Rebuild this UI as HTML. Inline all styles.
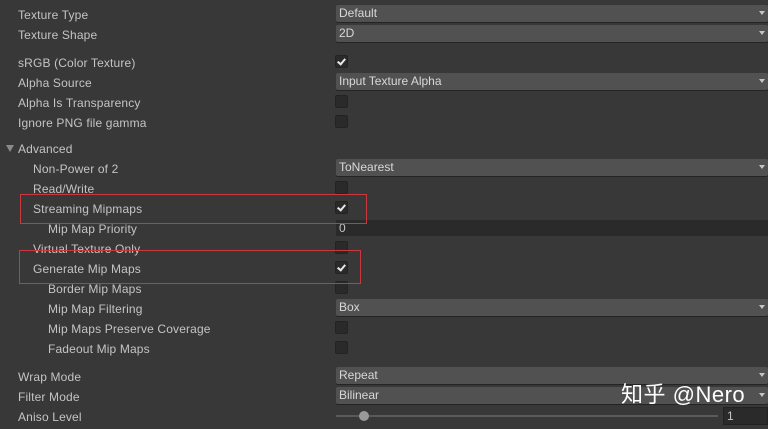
<!DOCTYPE html><html><head><style>
body{margin:0;width:768px;height:429px;background:#383838;font-family:"Liberation Sans","Noto Sans CJK SC",sans-serif;font-size:12px;color:#c4c4c4;position:relative;overflow:hidden}
.l{position:absolute;line-height:14px;white-space:nowrap;margin-top:1px;letter-spacing:0.15px}
.d{position:absolute;left:336px;width:432px;height:17px;background:#515151;border-radius:2px;box-shadow:0 1px 0 #242424;line-height:17px;text-indent:3px;color:#d8d8d8}
.d:after{content:"";position:absolute;right:3px;top:6px;border-left:3px solid transparent;border-right:3px solid transparent;border-top:4px solid #c4c4c4}
.c{position:absolute;left:335px;width:13px;height:13px;background:#2a2a2a;border-radius:2px;border:1px solid #232323;box-sizing:border-box}
.c.k:after{content:"";position:absolute;left:3px;top:1px;width:3px;height:6px;border:solid #e8e8e8;border-width:0 2px 2px 0;transform:rotate(40deg)}
.r{position:absolute;border:1px solid #c8383e}
</style></head><body>
<div class="l" style="left:18px;top:7px">Texture Type</div>
<div class="l" style="left:18px;top:27px">Texture Shape</div>
<div class="l" style="left:18px;top:55px">sRGB (Color Texture)</div>
<div class="l" style="left:18px;top:75px">Alpha Source</div>
<div class="l" style="left:18px;top:95px">Alpha Is Transparency</div>
<div class="l" style="left:18px;top:115px">Ignore PNG file gamma</div>
<div style="position:absolute;left:6px;top:145px;border-left:4px solid transparent;border-right:4px solid transparent;border-top:7px solid #8a8a8a"></div>
<div class="l" style="left:18px;top:141px">Advanced</div>
<div class="l" style="left:33px;top:161px">Non-Power of 2</div>
<div class="l" style="left:33px;top:181px">Read/Write</div>
<div class="l" style="left:33px;top:201px">Streaming Mipmaps</div>
<div class="l" style="left:48px;top:221px">Mip Map Priority</div>
<div class="l" style="left:33px;top:241px">Virtual Texture Only</div>
<div class="l" style="left:33px;top:261px">Generate Mip Maps</div>
<div class="l" style="left:48px;top:281px">Border Mip Maps</div>
<div class="l" style="left:48px;top:301px">Mip Map Filtering</div>
<div class="l" style="left:48px;top:321px">Mip Maps Preserve Coverage</div>
<div class="l" style="left:48px;top:341px">Fadeout Mip Maps</div>
<div class="l" style="left:18px;top:369px">Wrap Mode</div>
<div class="l" style="left:18px;top:389px">Filter Mode</div>
<div class="l" style="left:18px;top:409px">Aniso Level</div>

<div class="d" style="top:5px">Default</div>
<div class="d" style="top:25px">2D</div>
<div class="c k" style="top:55px"></div>
<div class="d" style="top:73px">Input Texture Alpha</div>
<div class="c" style="top:95px"></div>
<div class="c" style="top:115px"></div>
<div class="d" style="top:159px">ToNearest</div>
<div class="c" style="top:181px"></div>
<div class="c k" style="top:201px"></div>
<div style="position:absolute;left:336px;top:220px;width:432px;height:16px;background:#2a2a2a;line-height:17px;text-indent:3px">0</div>
<div class="c" style="top:241px"></div>
<div class="c k" style="top:261px"></div>
<div class="c" style="top:281px"></div>
<div class="d" style="top:299px">Box</div>
<div class="c" style="top:321px"></div>
<div class="c" style="top:341px"></div>
<div class="d" style="top:367px">Repeat</div>
<div class="d" style="top:387px">Bilinear</div>
<div style="position:absolute;left:336px;top:415px;width:382px;height:2px;background:#5a5a5a"></div>
<div style="position:absolute;left:359px;top:411px;width:10px;height:10px;border-radius:50%;background:#999"></div>
<div style="position:absolute;left:723px;top:407px;width:45px;height:18px;background:#2a2a2a;border:1px solid #222;box-sizing:border-box;line-height:17px;text-indent:3px">1</div>

<div class="r" style="left:20px;top:194px;width:345px;height:28px"></div>
<div class="r" style="left:19px;top:250px;width:340px;height:32px"></div>
<div style="position:absolute;left:621px;top:382px;font-size:22px;line-height:26px;color:#fff;letter-spacing:0.5px;white-space:nowrap">知乎 @Nero</div>
</body></html>
